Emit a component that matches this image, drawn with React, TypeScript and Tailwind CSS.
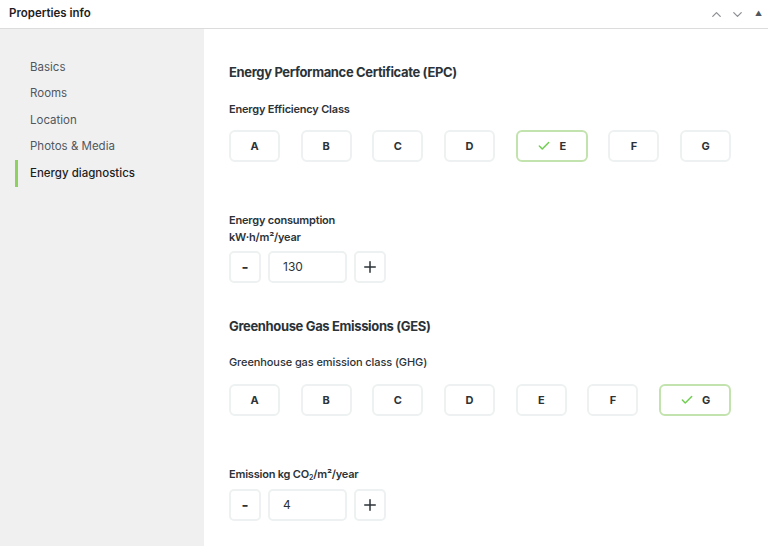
import { ChevronUp, ChevronDown, Check, Plus } from 'lucide-react';

const NAV = ['Basics', 'Rooms', 'Location', 'Photos & Media', 'Energy diagnostics'];
const CLASSES = ['A', 'B', 'C', 'D', 'E', 'F', 'G'];

function ClassPicker({ selected }: { selected: string }) {
  return (
    <div className="flex items-center gap-[20.7px]">
      {CLASSES.map((c) => {
        const isOn = c === selected;
        return (
          <div
            key={c}
            className={`h-[32px] flex items-center justify-center gap-2 rounded-[6px] border-2 text-[11px] font-bold text-[#2c3338] ${
              isOn ? 'w-[72px] border-[#c3e3ae]' : 'w-[51px] border-[#eef1f1]'
            }`}
          >
            {isOn ? <Check size={14} strokeWidth={2.5} className="text-[#6fcf4f]" /> : null}
            <span>{c}</span>
          </div>
        );
      })}
    </div>
  );
}

function Stepper({ value }: { value: string }) {
  return (
    <div className="flex items-center gap-[7px]">
      <div className="w-[32px] h-[32px] rounded-[5px] border-2 border-[#eef1f1] flex items-center justify-center text-[15px] font-bold text-[#2c3338]">
        -
      </div>
      <div className="w-[79px] h-[32px] rounded-[5px] border-2 border-[#eef1f1] flex items-center px-[13px] text-[12px] text-[#2c3338]">
        {value}
      </div>
      <div className="w-[32px] h-[32px] rounded-[5px] border-2 border-[#eef1f1] flex items-center justify-center text-[#2c3338]">
        <Plus size={18} strokeWidth={2} />
      </div>
    </div>
  );
}

export default function App() {
  return (
    <div
      className="w-[768px] h-[546px] bg-white flex flex-col overflow-hidden"
      style={{ fontFamily: 'Inter, "Noto Sans", sans-serif' }}
    >
      <div className="h-[29px] shrink-0 flex items-center justify-between pl-[9px] pr-[2px] border-b border-[#dcdcde]">
        <span className="text-[11.5px] font-semibold text-[#1e1e1e]">Properties info</span>
        <div className="flex items-center gap-[6px] text-[#8c8f94]">
          <ChevronUp size={15} strokeWidth={2} />
          <ChevronDown size={15} strokeWidth={2} />
          <span className="text-[7px] w-[15px] text-center text-[#50575e]">▲</span>
        </div>
      </div>
      <div className="flex flex-1 min-h-0">
        <div className="w-[204px] shrink-0 bg-[#f0f0f1] pt-[25px] pl-[15px]">
          {NAV.map((n) => {
            const active = n === 'Energy diagnostics';
            return (
              <div
                key={n}
                className={`h-[26.5px] flex items-center pl-[12px] text-[11.5px] border-l-[3px] ${
                  active ? 'border-[#8fd15f] text-[#1e1e1e] font-medium' : 'border-transparent text-[#50575e]'
                }`}
              >
                {n}
              </div>
            );
          })}
        </div>
        <div className="flex-1 pl-[25px] pt-[34px]">
          <h2 className="text-[13px] font-bold text-[#2c3338] leading-[18px] tracking-[-0.35px]">
            Energy Performance Certificate (EPC)
          </h2>
          <div className="mt-[21px] text-[11px] font-semibold text-[#2c3338] leading-[15px] tracking-[-0.2px]">
            Energy Efficiency Class
          </div>
          <div className="mt-[13px]">
            <ClassPicker selected="E" />
          </div>
          <div className="mt-[50px] text-[11px] font-semibold text-[#2c3338] leading-[17px] tracking-[-0.2px]">
            <div>Energy consumption</div>
            <div>kW·h/m²/year</div>
          </div>
          <div className="mt-[5px]">
            <Stepper value="130" />
          </div>
          <h2 className="mt-[34px] text-[13px] font-bold text-[#2c3338] leading-[18px] tracking-[-0.35px]">
            Greenhouse Gas Emissions (GES)
          </h2>
          <div className="mt-[20px] text-[11px] font-medium text-[#2c3338] leading-[15px] tracking-[-0.1px]">
            Greenhouse gas emission class (GHG)
          </div>
          <div className="mt-[14px]">
            <ClassPicker selected="G" />
          </div>
          <div className="mt-[51px] text-[11px] font-semibold text-[#2c3338] leading-[15px] tracking-[-0.2px]">
            Emission kg CO<sub className="text-[7px]">2</sub>/m²/year
          </div>
          <div className="mt-[7px]">
            <Stepper value="4" />
          </div>
        </div>
      </div>
    </div>
  );
}
